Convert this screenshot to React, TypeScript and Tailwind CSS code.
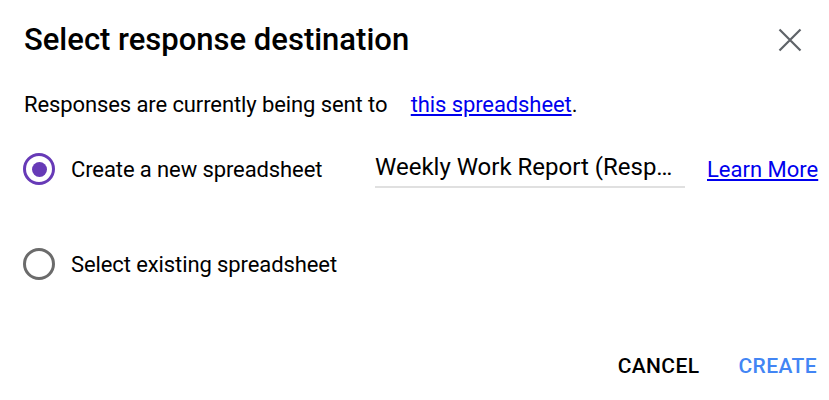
export default function App() {
  return (
    <div className="w-[829px] h-[400px] bg-white text-black font-['Roboto','Liberation_Sans',sans-serif]">
      {/* Header */}
      <div className="flex items-center justify-between pl-6 pr-[27px] pt-[21px]">
        <h1 className="text-[31px] font-medium leading-[38px]">Select response destination</h1>
        <button className="text-[#5f6368]">
          <svg width="24" height="24" viewBox="0 0 24 24" fill="none" stroke="currentColor" strokeWidth="2.2">
            <path d="M1.5 1.5 L22.5 22.5 M22.5 1.5 L1.5 22.5" />
          </svg>
        </button>
      </div>

      <p className="pl-6 mt-[31px] text-[22px] leading-[30px] tracking-[-0.1px]">
        Responses are currently being sent to{' '}
        <a href="#" className="ml-[18px] text-[#0000ee] underline">this spreadsheet</a>.
      </p>

      {/* Options */}
      <div className="pl-[23px] mt-[32px]">
        <div className="flex items-center h-[34px]">
          <span className="w-[32px] h-[32px] rounded-full border-[3px] border-[#673ab7] flex items-center justify-center">
            <span className="w-[15px] h-[15px] rounded-full bg-[#673ab7]" />
          </span>
          <span className="ml-[16px] text-[22px] tracking-[-0.1px] w-[304px]">Create a new spreadsheet</span>
          <div className="w-[310px] border-b-2 border-[#e0e0e0] pb-[4px] mt-[2px]">
            <div className="text-[24px] leading-[30px] whitespace-nowrap">Weekly Work Report (Resp…</div>
          </div>
          <a href="#" className="ml-[22px] text-[22px] text-[#0000ee] underline">Learn More</a>
        </div>

        <div className="flex items-center h-[34px] mt-[61px]">
          <span className="w-[32px] h-[32px] rounded-full border-[3px] border-[#6b6b6b]" />
          <span className="ml-[16px] text-[22px] tracking-[-0.1px]">Select existing spreadsheet</span>
        </div>
      </div>

      {/* Actions */}
      <div className="flex justify-end gap-[39px] pr-[12px] mt-[70px]">
        <button className="text-[21px] font-medium tracking-[0.4px]">CANCEL</button>
        <button className="text-[21px] font-medium tracking-[0.4px] text-[#4285f4]">CREATE</button>
      </div>
    </div>
  );
}
